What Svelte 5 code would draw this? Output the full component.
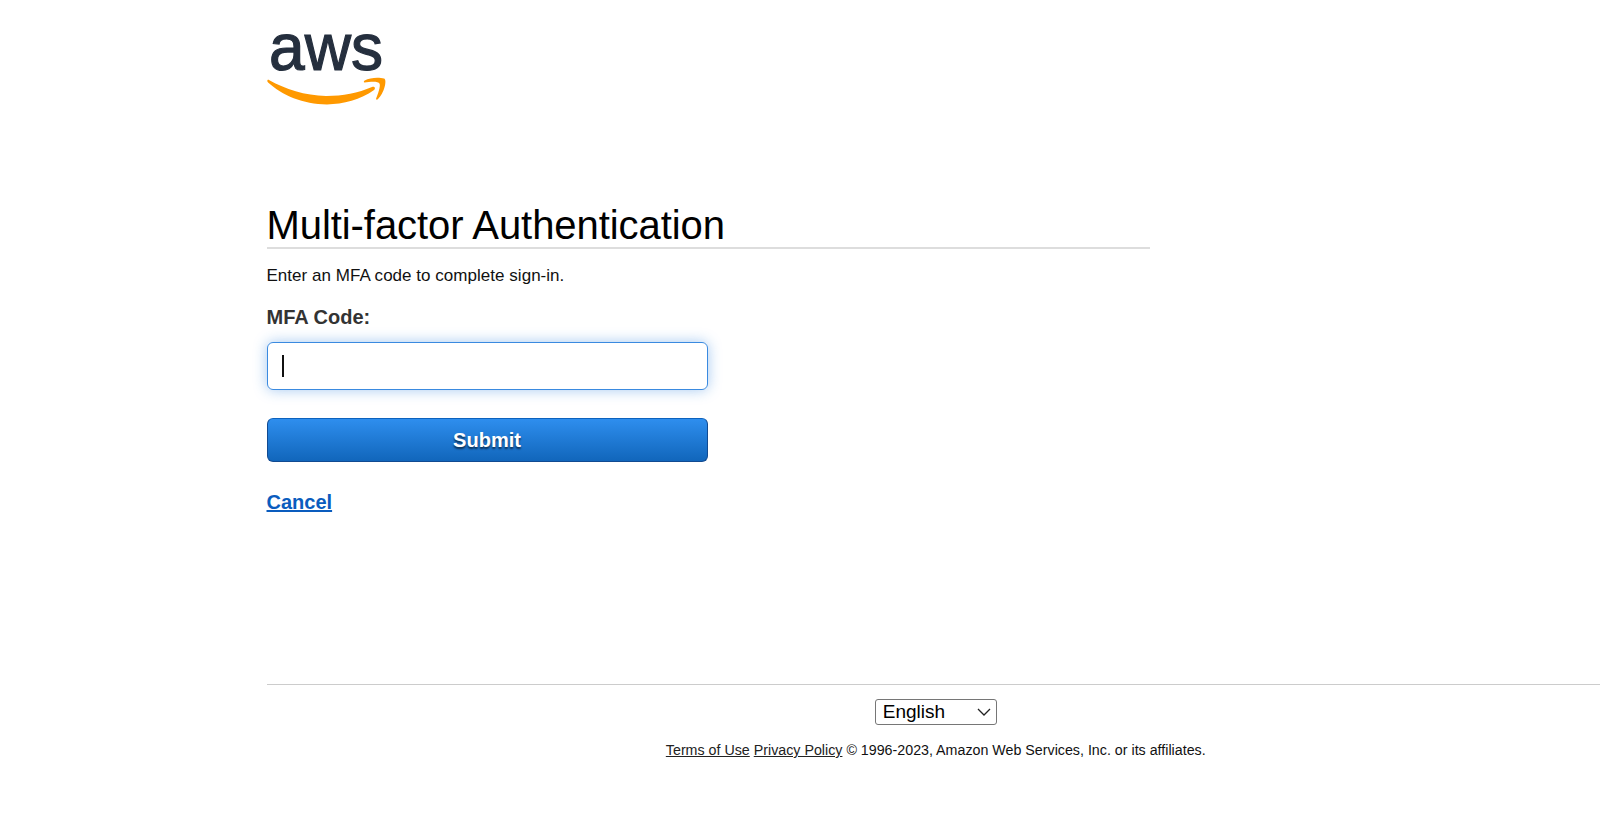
<script>
    let language = "English";
    const languages = ["English"];
</script>


<div id="page">
    <header>
        <svg id="logo" width="120" height="74" viewBox="0 0 120 74" role="img" aria-label="AWS">
            <text x="2" y="36.500" textLength="114" lengthAdjust="spacingAndGlyphs">aws</text>
            <!--smile-->
            <path d="M0.4 48.4C0 47 1 46.4 2.4 47.2C18 56 38 62.6 59 62.9C75 63 91 60 105 53.9C107.800 52.800 109 55.500 106.700 57.300C94 66.500 76 71.400 60 71.400C36 71.400 15 62.300 1.100 49.600Z" />
            <path d="M97.600 49.500C96.500 49.400 96.600 48.300 97.700 47.600C103 44.200 112.500 44.200 117 45.500C120.500 46.500 117.200 60.500 110.800 66.300C109.600 67.300 108.700 66.500 109.200 65.300C110.800 61.500 113.700 53.300 112.600 50.700C111.300 48 103 48.900 97.600 49.500Z" />
        </svg>
    </header>

    <main>
        <h1>Multi-factor Authentication</h1>
        <p id="message">Enter an MFA code to complete sign-in.</p>

        <form on:submit|preventDefault>
            <span id="mfa-label">MFA Code:</span>
            <div id="mfa-code" role="textbox" aria-labelledby="mfa-label" tabindex="0">
                <span class="caret"></span>
            </div>
            <button>Submit</button>
        </form>

        <a id="cancel" href="#cancel">Cancel</a>
    </main>

    <footer>
        <div id="language">
            <select bind:value={language} aria-label="Language">
                {#each languages as name}
                    <option>{name}</option>
                {/each}
            </select>
            <svg width="14" height="8" viewBox="0 0 14 8">
                <path d="M1 1L7 7L13 1" />
            </svg>
        </div>
        <p><a href="#terms">Terms of Use</a> <a href="#privacy">Privacy Policy</a> © 1996-2023, Amazon Web Services, Inc. or its affiliates.</p>
    </footer>
</div>

<style>
:global(body) {
    background-color: white;
    overflow: hidden;
}

#page {
    box-sizing: border-box;
    width: 1605px;
    height: 827px;
    padding: 33px 0 0 266.5px;
    font-family: "Liberation Sans", Arial, sans-serif;
    color: #111;
}

header {
    height: 168px;
}

#logo {
    display: block;
    overflow: visible;
}

#logo text {
    font-family: "Liberation Sans", Arial, sans-serif;
    font-size: 66px;
    fill: #252f3e;
    stroke: #252f3e;
    stroke-width: 1.2;
}

#logo path {
    fill: #ff9900;
}

main {
    width: 883px;
    height: 483px;
}

h1 {
    margin: 0;
    height: 46px;
    border-bottom: 2px solid #ddd;
    font-size: 40px;
    font-weight: 400;
    line-height: 48px;
    letter-spacing: -0.07px;
    color: black;
}

#message {
    margin: 16px 0 0;
    font-size: 17px;
    line-height: 22px;
    letter-spacing: 0.03px;
}

form {
    display: flex;
    flex-direction: column;
    width: 441px;
}

#mfa-label {
    margin-top: 18px;
    font-size: 20px;
    font-weight: 700;
    line-height: 24px;
    color: #333;
}

#mfa-code {
    box-sizing: border-box;
    display: flex;
    align-items: center;
    height: 48px;
    margin-top: 13px;
    padding-left: 14px;
    border: 1px solid #3a8ae0;
    border-radius: 6px;
    box-shadow: 0 0 14px rgba(30, 120, 220, 0.4);
    outline: none;
}

.caret {
    width: 2px;
    height: 22px;
    background-color: #111;
}

button {
    height: 44px;
    margin-top: 28px;
    padding: 0;
    border: 1px solid #114a91;
    border-top-color: #0d62bd;
    border-radius: 6px;
    background: linear-gradient(#2e8eee, #1166bb);
    font-family: inherit;
    font-size: 20px;
    font-weight: 700;
    color: white;
    text-shadow: 0 2px 2px rgba(0, 0, 0, 0.6);
}

#cancel {
    display: inline-block;
    margin-top: 28px;
    font-size: 20px;
    font-weight: 700;
    line-height: 24px;
    color: #0a5cbe;
}

footer {
    display: flex;
    flex-direction: column;
    align-items: center;
    border-top: 1px solid #ccc;
}

#language {
    display: grid;
    align-items: center;
    width: 122px;
    margin-top: 14px;
}

#language > * {
    grid-area: 1 / 1;
}

#language svg {
    justify-self: end;
    margin-right: 6px;
    fill: none;
    stroke: #222;
    stroke-width: 1.3;
    pointer-events: none;
}

select {
    appearance: none;
    width: 100%;
    height: 26px;
    padding: 0 7px 2px;
    border: 1px solid #767676;
    border-radius: 3px;
    background-color: white;
    font-family: inherit;
    font-size: 19px;
    color: black;
}

footer p {
    margin: 16px 0 0;
    font-size: 14.250px;
    line-height: 18px;
    white-space: nowrap;
}

footer a {
    color: #222;
}
</style>
